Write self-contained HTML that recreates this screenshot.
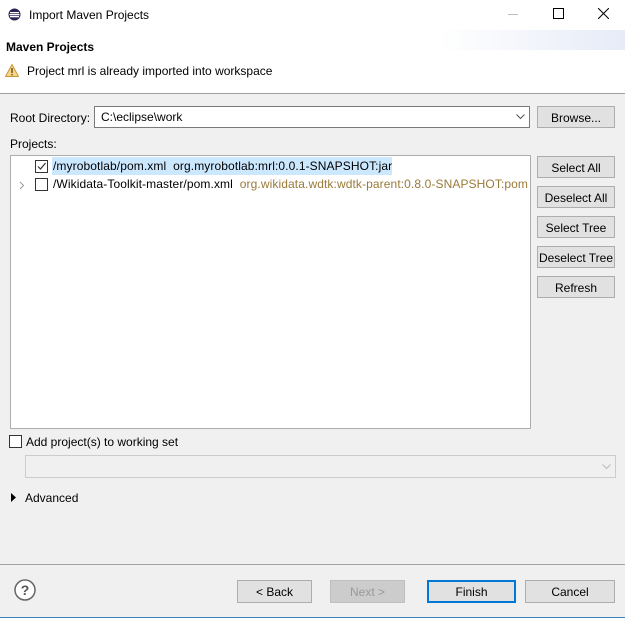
<!DOCTYPE html><html><head><style>
body{margin:0;width:625px;height:620px;overflow:hidden;background:#f0f0f0;font-family:"Liberation Sans",sans-serif;font-size:12px;color:#000;position:relative}
.a{position:absolute}
.btn{position:absolute;background:#e1e1e1;border:1px solid #adadad;box-sizing:border-box;text-align:center;line-height:22px;font-size:12px}
.cb{position:absolute;width:11px;height:11px;border:1px solid #333;background:#fff}
</style></head><body>
<div class="a" style="left:0;top:0;width:625px;height:93px;background:#fff"></div>
<div class="a" style="top:30px;left:440px;width:185px;height:20px;background:linear-gradient(90deg,#fff,#e6ebf7)"></div>
<div class="a" style="left:0;top:93px;width:625px;height:1px;background:#a0a0a0"></div>
<svg class="a" style="left:8px;top:8px" width="13" height="13"><circle cx="6.5" cy="6.5" r="6" fill="#2c2255"/><rect x="2" y="4" width="9" height="1.3" fill="#fff"/><rect x="1.5" y="6" width="10" height="1.3" fill="#fff"/><rect x="2" y="8" width="9" height="1.3" fill="#fff"/></svg>
<div class="a" style="left:29px;top:8px;font-size:12px;color:#000">Import Maven Projects</div>
<div class="a" style="left:508px;top:14px;width:10px;height:1px;background:#bbb"></div>
<div class="a" style="left:553px;top:8px;width:9px;height:9px;border:1px solid #000"></div>
<svg class="a" style="left:598px;top:8px" width="11" height="11"><path d="M0 0L11 11M11 0L0 11" stroke="#000" stroke-width="1"/></svg>
<div class="a" style="left:6px;top:40px;font-weight:bold;font-size:12px">Maven Projects</div>
<svg class="a" style="left:5px;top:64px" width="14" height="13"><path d="M7 0.5L13.5 12.5H0.5Z" fill="#f6d58a" stroke="#c89a3a"/><rect x="6.3" y="4" width="1.4" height="5" fill="#6a4a10"/><rect x="6.3" y="10" width="1.4" height="1.4" fill="#6a4a10"/></svg>
<div class="a" style="left:27px;top:64px">Project mrl is already imported into workspace</div>
<div class="a" style="left:10px;top:111px">Root Directory:</div>
<div class="a" style="left:94px;top:106px;width:436px;height:22px;box-sizing:border-box;border:1px solid #7a7a7a;background:#fff;padding:3px 6px">C:\eclipse\work</div>
<svg class="a" style="left:516px;top:114px" width="9" height="6"><path d="M0.5 0.5L4.5 4.5L8.5 0.5" stroke="#555" fill="none"/></svg>
<div class="btn" style="left:537px;top:106px;width:78px;height:22px">Browse...</div>
<div class="a" style="left:10px;top:137px">Projects:</div>
<div class="a" style="left:10px;top:155px;width:521px;height:274px;box-sizing:border-box;border:1px solid #adadad;background:#fff"></div>
<div class="a" style="left:52px;top:157px;width:340px;height:18px;background:#cce8ff"></div>
<div class="cb" style="left:35px;top:160px"></div>
<svg class="a" style="left:36px;top:161px" width="11" height="11"><path d="M2 5.5L4.5 8L9.5 2" stroke="#333" fill="none" stroke-width="1.2"/></svg>
<div class="a" style="left:53px;top:159px;letter-spacing:0.1px">/myrobotlab/pom.xml&nbsp; org.myrobotlab:mrl:0.0.1-SNAPSHOT:jar</div>
<svg class="a" style="left:19px;top:181px" width="6" height="9"><path d="M1 1L4.5 4.5L1 8" stroke="#999" fill="none"/></svg>
<div class="cb" style="left:35px;top:178px"></div>
<div class="a" style="left:53px;top:177px;letter-spacing:0.1px">/Wikidata-Toolkit-master/pom.xml&nbsp; <span style="color:#9a7a3a">org.wikidata.wdtk:wdtk-parent:0.8.0-SNAPSHOT:pom</span></div>
<div class="btn" style="left:537px;top:156px;width:78px;height:22px">Select All</div>
<div class="btn" style="left:537px;top:186px;width:78px;height:22px">Deselect All</div>
<div class="btn" style="left:537px;top:216px;width:78px;height:22px">Select Tree</div>
<div class="btn" style="left:537px;top:246px;width:78px;height:22px">Deselect Tree</div>
<div class="btn" style="left:537px;top:276px;width:78px;height:22px">Refresh</div>
<div class="cb" style="left:9px;top:435px"></div>
<div class="a" style="left:26px;top:435px">Add project(s) to working set</div>
<div class="a" style="left:25px;top:455px;width:591px;height:23px;box-sizing:border-box;border:1px solid #ccc;background:#f0f0f0"></div>
<svg class="a" style="left:602px;top:464px" width="9" height="6"><path d="M0.5 0.5L4.5 4.5L8.5 0.5" stroke="#bbb" fill="none"/></svg>
<svg class="a" style="left:11px;top:493px" width="5" height="9"><path d="M0 0L5 4.5L0 9Z" fill="#000"/></svg>
<div class="a" style="left:25px;top:491px">Advanced</div>
<div class="a" style="left:0;top:564px;width:625px;height:1px;background:#a0a0a0"></div>
<svg class="a" style="left:13px;top:578px" width="24" height="24"><circle cx="12" cy="12" r="10" fill="#fff" stroke="#666" stroke-width="1.5"/><text x="12" y="17" text-anchor="middle" font-family="Liberation Sans" font-size="14" font-weight="bold" fill="#555">?</text></svg>
<div class="btn" style="left:237px;top:580px;width:75px;height:23px">&lt; Back</div>
<div class="btn" style="left:330px;top:580px;width:75px;height:23px;background:#ccc;border-color:#bfbfbf;color:#999">Next &gt;</div>
<div class="btn" style="left:427px;top:580px;width:89px;height:23px;border:2px solid #0078d7;line-height:20px">Finish</div>
<div class="btn" style="left:525px;top:580px;width:90px;height:23px">Cancel</div>
<div class="a" style="left:0;top:617px;width:625px;height:1px;background:#3c7fc0"></div>
<div class="a" style="left:0;top:618px;width:625px;height:2px;background:#fff"></div>
</body></html>
